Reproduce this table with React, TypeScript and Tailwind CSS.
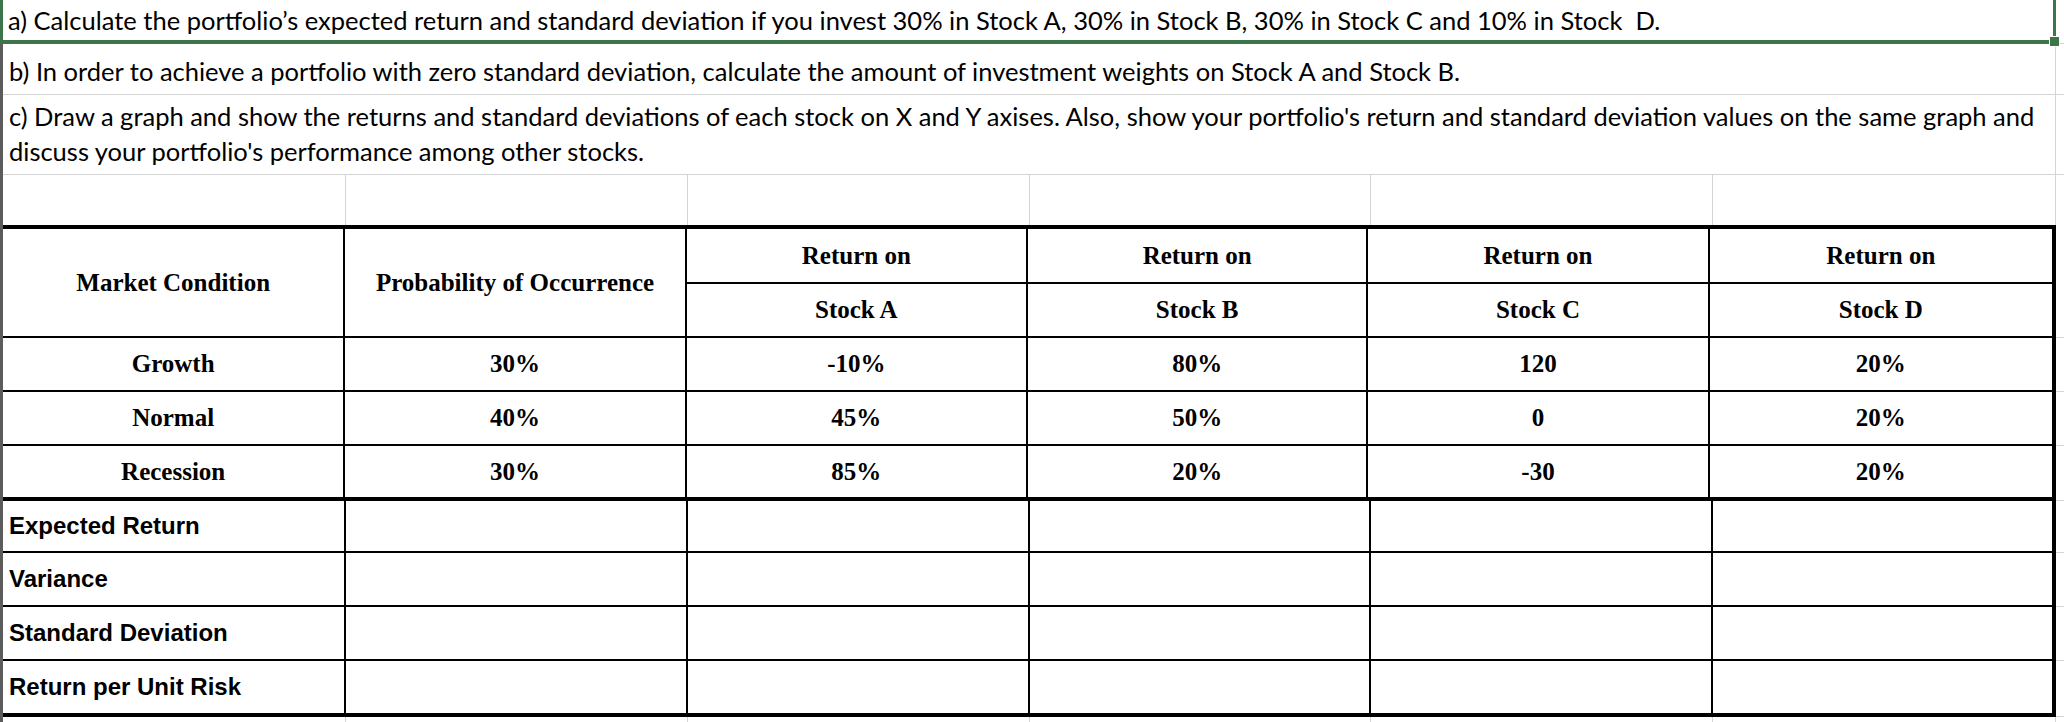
import React from 'react';

// column widths incl. right border, starting at x=3
const colW = ['w-[343px]', 'w-[342px]', 'w-[342px]', 'w-[341px]', 'w-[342px]', 'w-[343px]'];

const rows = [
  ['Growth', '30%', '-10%', '80%', '120', '20%'],
  ['Normal', '40%', '45%', '50%', '0', '20%'],
  ['Recession', '30%', '85%', '20%', '-30', '20%'],
];

const results = [
  { label: 'Expected Return', h: 'h-[52px] border-b-2' },
  { label: 'Variance', h: 'h-[54px] border-b-2' },
  { label: 'Standard Deviation', h: 'h-[54px] border-b-2' },
  { label: 'Return per Unit Risk', h: 'h-[52px]' },
];

const serif = "font-['Liberation_Serif',serif] font-bold text-[25px] text-black";
const calib = 'font-[Lato] text-[25.5px] text-black';

const Stub = ({ h }: { h: string }) => <div className={`w-[8px] ${h} border-b border-[#d4d4d4]`} />;

const App: React.FC = () => {
  return (
    <div className="w-[2064px] h-[722px] bg-white flex overflow-hidden relative">
      {/* row header edge */}
      <div className="w-[3px] flex flex-col">
        <div className="h-[44px] bg-[#3b7549]" />
        <div className="flex-1 bg-[#5c5c5c]" />
      </div>

      <div className="flex flex-col">
        {/* question rows */}
        <div className="flex">
          <div className={`w-[2053px] h-[44px] border-b-[4px] border-r-[3px] border-[#3b7549] pl-[5px] flex items-end pb-[7px] whitespace-pre leading-none ${calib}`}>
            a) Calculate the portfolio’s expected return and standard deviation if you invest 30% in Stock A, 30% in Stock B, 30% in Stock C and 10% in Stock  D.
          </div>
          <Stub h="h-[44px]" />
        </div>
        <div className="flex">
          <div className={`w-[2053px] h-[51px] border-b border-r border-[#d4d4d4] pl-[6px] flex items-end pb-[10px] leading-none ${calib}`}>
            b) In order to achieve a portfolio with zero standard deviation, calculate the amount of investment weights on Stock A and Stock B.
          </div>
          <Stub h="h-[51px]" />
        </div>
        <div className="flex">
          <div className={`w-[2053px] h-[80px] border-b border-r border-[#d4d4d4] pl-[6px] pt-[4px] leading-[35px] ${calib}`}>
            c) Draw a graph and show the returns and standard deviations of each stock on X and Y axises. Also, show your portfolio's return and standard deviation values on the same graph and
            <br />
            discuss your portfolio's performance among other stocks.
          </div>
          <Stub h="h-[80px]" />
        </div>
        <div className="flex">
          {colW.map((w, i) => (
            <div key={i} className={`${w} h-[50px] border-r border-[#d4d4d4]`} />
          ))}
          <div className="w-[8px]" />
        </div>

        {/* data table */}
        <div className="flex">
          <div className="w-[2053px] border-t-[4px] border-r-[4px] border-b-[4px] border-black flex flex-col">
            {/* header */}
            <div className="flex h-[109px] border-b-2 border-black">
              <div className={`w-[343px] border-r-2 border-black flex items-center justify-center ${serif}`}>Market Condition</div>
              <div className={`w-[342px] border-r-2 border-black flex items-center justify-center ${serif}`}>Probability of Occurrence</div>
              {['A', 'B', 'C', 'D'].map((s, i) => (
                <div key={s} className={`${colW[i + 2]} ${i < 3 ? 'border-r-2' : ''} border-black flex flex-col`}>
                  <div className={`h-[55px] border-b-2 border-black flex items-center justify-center ${serif}`}>Return on</div>
                  <div className={`flex-1 flex items-center justify-center ${serif}`}>Stock {s}</div>
                </div>
              ))}
            </div>

            {rows.map((r, ri) => (
              <div key={ri} className={`flex ${ri === 2 ? 'h-[55px] border-b-[4px]' : 'h-[54px] border-b-2'} border-black`}>
                {r.map((v, ci) => (
                  <div
                    key={ci}
                    className={`${colW[ci]} ${ci < 5 ? 'border-r-2' : 'w-[339px]'} border-black flex items-center justify-center ${serif}`}
                  >
                    {v}
                  </div>
                ))}
              </div>
            ))}

            {results.map((row) => (
              <div key={row.label} className={`flex ${row.h} border-black`}>
                <div className="w-[343px] border-r-2 border-black flex items-center pl-[6px] font-['Liberation_Sans',sans-serif] font-bold text-[24px] text-black">
                  {row.label}
                </div>
                {[1, 2, 3, 4].map((c) => (
                  <div key={c} className={`${colW[c]} border-r-2 border-black`} />
                ))}
                <div className="flex-1" />
              </div>
            ))}
          </div>
          <div className="w-[8px] flex flex-col">
            <Stub h="h-[113px]" />
            <Stub h="h-[54px]" />
            <Stub h="h-[54px]" />
            <Stub h="h-[55px]" />
            <Stub h="h-[52px]" />
            <Stub h="h-[54px]" />
            <Stub h="h-[54px]" />
            <Stub h="h-[56px]" />
          </div>
        </div>

        {/* gridline stubs below */}
        <div className="flex h-[10px]">
          {colW.map((w, i) => (
            <div key={i} className={`${w} border-r border-[#d4d4d4]`} />
          ))}
        </div>
      </div>

      {/* selection handle */}
      <div className="absolute left-[2049px] top-[36px] w-[11px] h-[11px] bg-[#3b7549] border border-white" />
    </div>
  );
};

export default App;
